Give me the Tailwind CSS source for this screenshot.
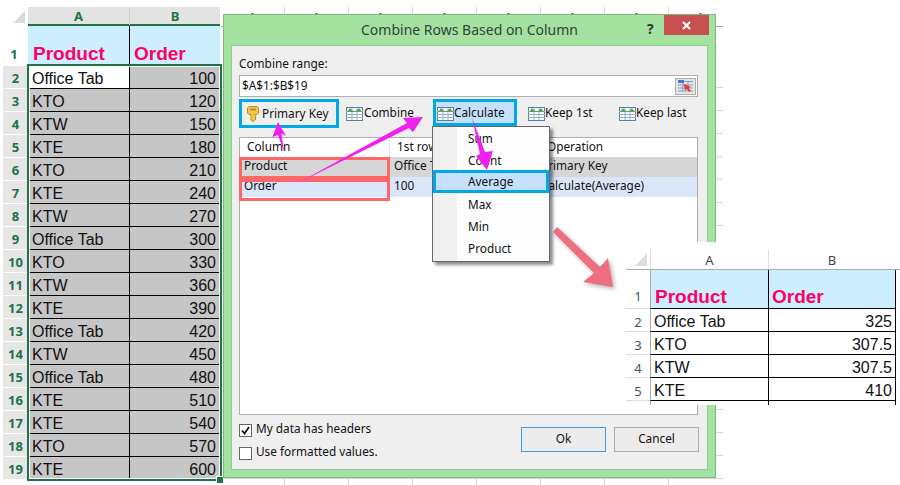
<!DOCTYPE html>
<html lang="en">
<head>
  <meta charset="UTF-8" />
  <title>Combine Rows Based on Column</title>
  <script src="https://cdn.jsdelivr.net/npm/@tailwindcss/browser@4"></script>
</head>
<body class="bg-white">
<div class="relative w-[900px] h-[485px] overflow-hidden bg-white font-['Noto_Sans',sans-serif] text-[11.8px] text-[#111]">

  <!-- empty grid behind the dialog -->
  <div class="absolute left-[221px] top-[7px] w-[503px] h-[478px] bg-[repeating-linear-gradient(90deg,transparent_0,transparent_63px,#d4d4d4_63px,#d4d4d4_64px)]"></div>
  <div class="absolute left-[221px] top-[65px] w-[502px] h-[420px] bg-[repeating-linear-gradient(180deg,transparent_0,transparent_22px,#d4d4d4_22px,#d4d4d4_23px)]"></div>
  <div class="absolute left-[221px] top-[26px] w-[502px] h-px bg-[#aaa]"></div>
  <div class="absolute left-[251px] top-[13px] flex gap-[61px]">
    <i class="w-[3px] h-px bg-[#777]"></i><i class="w-[3px] h-px bg-[#777]"></i><i class="w-[3px] h-px bg-[#777]"></i><i class="w-[3px] h-px bg-[#777]"></i><i class="w-[3px] h-px bg-[#777]"></i><i class="w-[3px] h-px bg-[#777]"></i><i class="w-[3px] h-px bg-[#777]"></i><i class="w-[3px] h-px bg-[#777]"></i>
  </div>

  <!-- main sheet -->
  <div class="absolute left-0 top-[7px] w-[221px] font-['Liberation_Sans',sans-serif]">
    <div class="flex h-[19px]">
      <div class="relative w-[28px] shrink-0">
        <svg class="absolute left-[13px] top-[4px]" width="12" height="12"><polygon points="12,0 12,12 0,12" fill="#d9d9d9"/></svg>
      </div>
      <div class="w-[102px] bg-[#e3e3e3] border-r border-[#cfcfcf] border-b-2 border-b-[#217346] text-center text-[#217346] font-bold text-[13px] leading-[19px] font-['Noto_Sans',sans-serif]">A</div>
      <div class="w-[90px] bg-[#e3e3e3] border-b-2 border-[#217346] text-center text-[#217346] font-bold text-[13px] leading-[19px] font-['Noto_Sans',sans-serif]">B</div>
    </div>
    <div class="flex h-[40px]">
      <div class="w-[28px] shrink-0 pl-[3px]"><div class="h-full pr-[3px] flex items-end justify-center pb-[2px] text-[#217346] font-bold text-[13px] font-['Noto_Sans',sans-serif]">1</div></div>
      <div class="w-[102px] bg-[#cceeff] border-r border-black flex items-end pl-[5px] pb-[1px] text-[19px] font-bold text-[#ff0066] leading-[22px]">Product</div>
      <div class="w-[90px] bg-[#cceeff] flex items-end pl-[4px] pb-[1px] text-[19px] font-bold text-[#ff0066] leading-[22px]">Order</div>
    </div>
    <div id="rows"></div>
    <!-- selection outline -->
    <div class="absolute left-[27px] top-[57px] w-[195px] h-[417px] border-2 border-[#217346] shadow-[inset_0_0_0_1px_#fff]"></div>
    <div class="absolute left-[217px] top-[470px] w-[6px] h-[6px] bg-[#217346] outline outline-white"></div>
  </div>

  <!-- dialog -->
  <div class="absolute left-[223px] top-[14px] w-[493px] h-[464px] bg-[#a4e2a2] border border-[#7dbb7d]">
    <div class="relative h-[30px] text-center text-[14px] leading-[30px] text-[#36423a]">Combine Rows Based on Column
      <span class="absolute left-[423px] top-[-1px] font-bold text-[14px] text-[#333]">?</span>
      <div class="absolute left-[440px] top-0 w-[45px] h-[20px] bg-[#c75050] flex items-center justify-center">
        <svg width="9" height="9" viewBox="0 0 9 9"><path d="M1 1L8 8M8 1L1 8" stroke="#fff" stroke-width="2"/></svg>
      </div>
    </div>

    <div class="mx-[7px] h-[425px] bg-[#efefef] border border-[#8ccf8c] pl-[7px] pr-[9px] relative">
      <div class="h-[29px] leading-[34px]">Combine range:</div>
      <div class="h-[22px] bg-white border border-[#adadad] flex items-center justify-between pl-[2px] pr-[1px]">
        <span class="leading-[17px] mb-[2px]">$A$1:$B$19</span>
        <div class="w-[21px] h-[17px] bg-[#e4e4e4] border border-[#adadad] flex items-center justify-center">
          <svg width="16" height="12" viewBox="0 0 16 12"><path d="M0 1.5H15M0 5H15M0 8H15M0 11H15M5 1V11M10 1V11" stroke="#7f9fc9" fill="none"/><rect x="0" y="0" width="6" height="3" fill="#4a78c0"/><path d="M6 4L13 7L10.5 8L13 11L11 12L9 9L7 10.5Z" fill="#e8392c"/></svg>
        </div>
      </div>

      <div class="relative h-[40px] flex items-start pt-[2px]">
        <div class="w-[100px] h-[29px] border-[3px] border-[#00a8e8] flex items-center pl-[5px] gap-[3px]">
          <svg width="12" height="16" viewBox="0 0 12 16"><path d="M2 0.5H10L11.5 2V7L10 8.5H8V10L9 11L8 12L9 13L6 15.5L4 14V8.5H2L0.5 7V2Z" fill="#f3c64a" stroke="#b98f24"/><rect x="3" y="2.5" width="6" height="2" fill="#b98f24"/></svg>
          <span>Primary Key</span>
        </div>
        <div class="flex items-center h-[27px] ml-[7px] w-[87px]">
          <svg width="17" height="16" viewBox="0 0 17 16"><use href="#grid"/></svg><span class="ml-px">Combine</span>
        </div>
        <div class="relative w-[84px] h-[27px] border-[3px] border-[#00a8e8] bg-[#c5e0fc] flex items-center pl-[1px]">
          <svg width="17" height="16" viewBox="0 0 17 16"><use href="#grid"/></svg><span>Calculate</span>
        </div>
        <div class="flex items-center h-[27px] ml-[11px] w-[91px]">
          <svg width="17" height="16" viewBox="0 0 17 16"><use href="#grid"/></svg><span>Keep 1st</span>
        </div>
        <div class="flex items-center h-[27px]">
          <svg width="17" height="16" viewBox="0 0 17 16"><use href="#grid"/></svg><span>Keep last</span>
        </div>
      </div>

      <!-- column table -->
      <div class="relative h-[278px] bg-white border border-[#adadad]">
        <div class="grid grid-cols-[150px_150px_1fr] h-[19px] leading-[17px]">
          <div class="pl-[7px] border-r border-[#dfe6f0]">Column</div>
          <div class="pl-[7px] border-r border-[#dfe6f0]">1st row</div>
          <div class="pl-[7px]">Operation</div>
        </div>
        <div class="grid grid-cols-[150px_150px_1fr] h-[20px] leading-[16px] bg-[#d6d6d6]">
          <div class="pl-[4px]">Product</div><div class="pl-[4px]">Office Tab</div><div class="pl-[1px]">Primary Key</div>
        </div>
        <div class="grid grid-cols-[150px_150px_1fr] h-[20px] leading-[16px] bg-[#dbe6fa]">
          <div class="pl-[4px]">Order</div><div class="pl-[4px]">100</div><div class="pl-[1px]">Calculate(Average)</div>
        </div>
        <div class="absolute left-[-1px] top-[19px] w-[151px] h-[22px] border-[3px] border-[#ff6666]"></div>
        <div class="absolute left-[-1px] top-[41px] w-[151px] h-[22px] border-[3px] border-[#ff6666]"></div>
      </div>

      <!-- bottom controls -->
      <div class="relative pt-[9px]">
        <label class="flex items-center gap-[4px] h-[13px]">
          <span class="w-[13px] h-[13px] border border-[#666] bg-white flex items-center justify-center">
            <svg width="9" height="9" viewBox="0 0 9 9"><path d="M1 4.5L3.5 7.5L8 1" stroke="#111" stroke-width="1.8" fill="none"/></svg>
          </span><span class="mb-[3px]">My data has headers</span>
        </label>
        <label class="flex items-center gap-[4px] h-[13px] mt-[10px]">
          <span class="w-[13px] h-[13px] border border-[#666] bg-white"></span><span class="mb-[3px]">Use formatted values.</span>
        </label>
        <div class="absolute right-[-1px] top-[12px] flex gap-[8px]">
          <div class="w-[85px] h-[25px] bg-[#ececec] border border-[#3c9ae8] text-center leading-[21px]">Ok</div>
          <div class="w-[85px] h-[25px] bg-[#ececec] border border-[#adadad] text-center leading-[21px]">Cancel</div>
        </div>
      </div>
    </div>
  </div>

  <!-- dropdown of Calculate -->
  <div class="absolute left-[432px] top-[126px] w-[118px] h-[136px] bg-[#fdfdfd] border border-[#666] shadow-[3px_3px_3px_rgba(0,0,0,0.45)] pt-px">
    <div class="absolute left-0 top-0 w-[24px] h-full bg-[#f0f0f0]"></div>
    <div class="relative pl-[35px] h-[22px] leading-[20px]">Sum</div>
    <div class="relative pl-[35px] h-[22px] leading-[20px]">Count</div>
    <div class="relative pl-[35px] h-[22px] leading-[20px]">Average</div>
    <div class="relative pl-[35px] h-[22px] leading-[20px]">Max</div>
    <div class="relative pl-[35px] h-[22px] leading-[20px]">Min</div>
    <div class="relative pl-[35px] h-[22px] leading-[20px]">Product</div>
    <div class="absolute left-0 top-[43px] w-[116px] h-[23px] border-[3px] border-[#00a8e8] bg-[#c5e0fc] pl-[32px] leading-[17px]">Average</div>
  </div>

  <!-- result sheet -->
  <div class="absolute left-[626px] top-[242px] w-[274px] h-[163px] bg-white font-['Liberation_Sans',sans-serif]">
    <div class="flex h-[28px] pt-[8px] border-b border-[#aaa]">
      <div class="relative w-[24px] shrink-0">
        <svg class="absolute left-[9px] top-[3px]" width="12" height="13"><polygon points="12,0 12,13 0,13" fill="#dcdcdc"/></svg>
      </div>
      <div class="w-[118px] border-l border-[#ddd] text-center text-[13px] leading-[20px] text-[#444] font-['Noto_Sans',sans-serif]">A</div>
      <div class="w-[127px] border-l border-[#ddd] text-center text-[13px] leading-[20px] text-[#444] font-['Noto_Sans',sans-serif]">B</div>
    </div>
    <div class="flex h-[39px]">
      <div class="w-[24px] shrink-0 flex items-end justify-center pb-[2px] text-[13px] text-[#44546a] font-['Noto_Sans',sans-serif] border-b border-[#ddd]">1</div>
      <div class="w-[118px] bg-[#cceeff] border-l border-[#aaa] border-b border-b-black flex items-end pl-[4px] text-[19px] font-bold text-[#ff0066] leading-[22px]">Product</div>
      <div class="w-[128px] bg-[#cceeff] border-x border-x-black border-b border-b-black flex items-end pl-[3px] text-[19px] font-bold text-[#ff0066] leading-[22px]">Order</div>
    </div>
    <div id="result"></div>
    <div class="flex h-[4px]">
      <div class="w-[24px] shrink-0"></div>
      <div class="w-[118px] border-l border-[#aaa]"></div>
      <div class="w-[128px] border-x border-black"></div>
    </div>
  </div>

  <!-- annotation arrows -->
  <svg class="absolute left-0 top-0" width="900" height="485">
    <defs>
      <g id="grid">
        <rect x="0.5" y="2.5" width="16" height="13" fill="#fff" stroke="#5f7d9f"/>
        <path d="M0 6.5H17M0 9.5H17M0 12.5H17M6 3V15M11 3V15" stroke="#8fb0d6" fill="none"/>
        <path d="M1 7L4 3L7 6L10 6L13 3L16 7Z" fill="#5f9e5a"/>
      </g>
    </defs>
    <polygon points="278,122 286,136 281.5,133.5 284,152 278,135 272.5,137" fill="#f020f0"/>
    <polygon points="298,183 407,123 403,118 423,117 413,132 409,128" fill="#f020f0"/>
    <polygon points="472,118 485,152 493,151 487,170 476,156 480,154" fill="#f020f0"/>
    <polygon class="drop-shadow-[2px_2px_2px_rgba(0,0,0,0.3)]" points="557,227 600,267 608,258 613,287 583,282 594,273 553,232" fill="#ef6f80"/>
  </svg>
</div>

<script>
  // sheet rows, class strings written out so the tailwind build sees them
  const data = [["Office Tab",100],["KTO",120],["KTW",150],["KTE",180],["KTO",210],["KTE",240],["KTW",270],["Office Tab",300],["KTO",330],["KTW",360],["KTE",390],["Office Tab",420],["KTW",450],["Office Tab",480],["KTE",510],["KTE",540],["KTO",570],["KTE",600]]
  document.getElementById("rows").innerHTML = data.map((r, i) => `
    <div class="flex h-[23px] text-[16px] leading-[26px]">
      <div class="w-[28px] shrink-0 pl-[3px]"><div class="h-full bg-[#e6e6e6] border-b border-white text-center text-[#217346] font-bold text-[13px] leading-[24px] font-['Noto_Sans',sans-serif]">${i + 2}</div></div>
      <div class="w-[102px] pl-[4px] ${i == 0 ? "bg-white" : "bg-[#c6c6c6]"} border-r border-b border-black">${r[0]}</div>
      <div class="w-[90px] pr-[4px] text-right bg-[#c6c6c6] border-b border-black">${r[1]}</div>
    </div>`).join("")
  const res = [["Office Tab","325"],["KTO","307.5"],["KTW","307.5"],["KTE","410"]]
  document.getElementById("result").innerHTML = res.map((r, i) => `
    <div class="flex h-[23px] text-[16px] leading-[26px]">
      <div class="w-[24px] shrink-0 text-center text-[13px] text-[#44546a] border-b border-[#ddd] font-['Noto_Sans',sans-serif]">${i + 2}</div>
      <div class="w-[118px] pl-[3px] border-l border-[#aaa] border-b border-b-black">${r[0]}</div>
      <div class="w-[128px] pr-[3px] text-right border-x border-x-black border-b border-b-black">${r[1]}</div>
    </div>`).join("")
</script>
</body>
</html>
